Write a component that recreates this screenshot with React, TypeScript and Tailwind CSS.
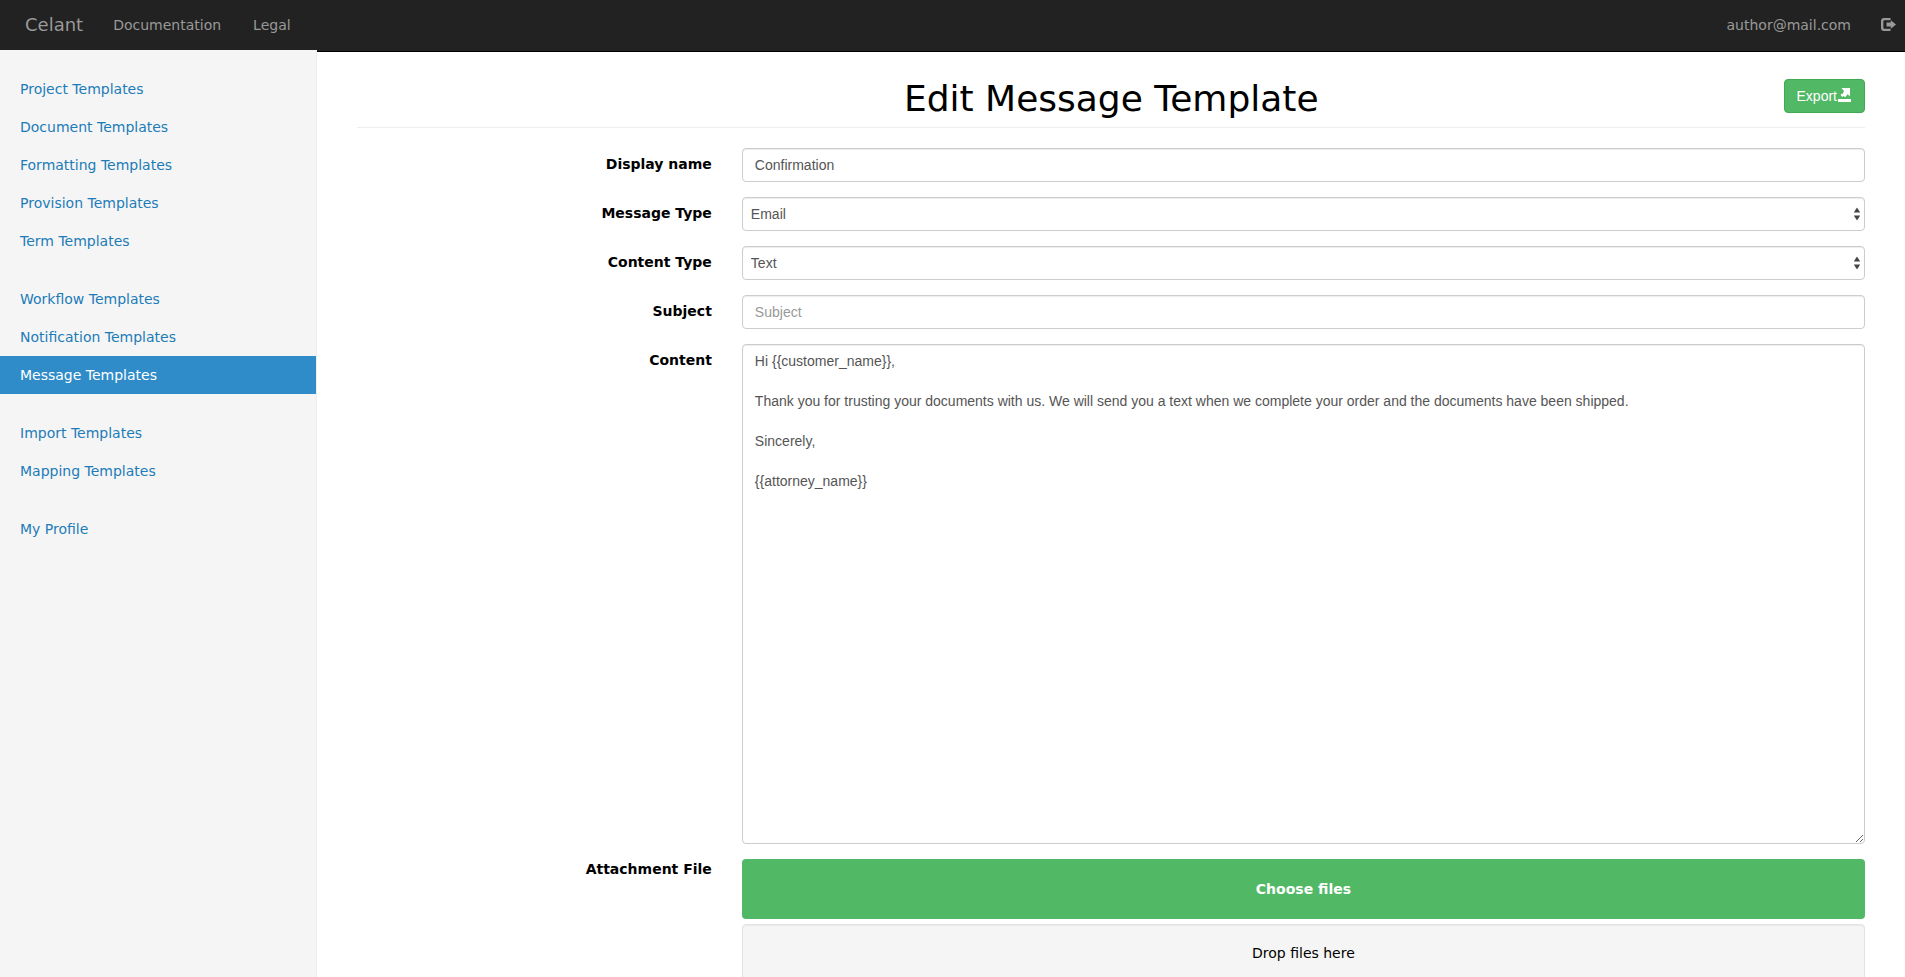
import React from 'react';

const navGroups: string[][] = [
  ['Project Templates', 'Document Templates', 'Formatting Templates', 'Provision Templates', 'Term Templates'],
  ['Workflow Templates', 'Notification Templates', 'Message Templates'],
  ['Import Templates', 'Mapping Templates'],
  ['My Profile'],
];

const activeItem = 'Message Templates';

const messageBody = `Hi {{customer_name}},

Thank you for trusting your documents with us. We will send you a text when we complete your order and the documents have been shipped.

Sincerely,

{{attorney_name}}`;

const controlClass =
  "block w-full rounded border border-[#cccccc] bg-white py-1.5 font-['Liberation_Sans',Arial,sans-serif] text-sm leading-5 text-[#555555] shadow-[inset_0_1px_1px_rgba(0,0,0,0.075)] outline-none placeholder:text-[#999999] placeholder:opacity-100 focus:border-[#66afe9]";

function LogOutIcon() {
  return (
    <svg className="h-[13px] w-[15px]" viewBox="0 0 15 13" fill="currentColor" aria-hidden="true">
      <path d="M9.5 0H3Q0 0 0 3v7q0 3 3 3h6.5v-2.300H3.400q-1 0-1-1V3.300q0-1 1-1h6.100z" />
      <path d="M9.800 2.200 15 6.500l-5.200 4.300V8.500H5.500v-4h4.300z" />
    </svg>
  );
}

function ExportIcon() {
  return (
    <svg className="h-3.5 w-3.5" viewBox="0 0 14 14" fill="currentColor" aria-hidden="true">
      <path d="M3.500 0H12v8.300L9.600 6.300 7.200 9.200 5.400 8 4.600 9 2.700 7.600l.5-2 1.200.6L6 3z" />
      <path d="M0 11h13v3H0z" />
    </svg>
  );
}

function SelectArrows() {
  return (
    <svg
      className="pointer-events-none absolute top-1/2 right-1 h-[13px] w-2 -translate-y-1/2"
      viewBox="0 0 8 13"
      fill="#444444"
      aria-hidden="true"
    >
      <path d="M4 0 7.200 5H.8z" />
      <path d="M4 13 .8 8h6.400z" />
    </svg>
  );
}

type FieldProps = {
  id: string;
  label: string;
  flush?: boolean;
  children: React.ReactNode;
};

function Field({ id, label, flush = false, children }: FieldProps) {
  return (
    <div className="-mx-[15px] flex">
      <label
        htmlFor={id}
        className={`w-1/4 px-[15px] text-right text-sm leading-5 font-bold ${flush ? 'pt-0' : 'pt-1.5'}`}
      >
        {label}
      </label>
      <div className="w-3/4 px-[15px]">{children}</div>
    </div>
  );
}

function SelectField({ id, label, options }: { id: string; label: string; options: string[] }) {
  return (
    <Field id={id} label={label}>
      <div className="relative">
        <select id={id} className={`${controlClass} appearance-none px-2`}>
          {options.map((option) => (
            <option key={option}>{option}</option>
          ))}
        </select>
        <SelectArrows />
      </div>
    </Field>
  );
}

function TopBar() {
  return (
    <header className="flex h-[52px] items-center justify-between border-b border-black bg-[#222222] pr-[9px] pb-0.5 pl-[25px] text-sm text-[#999999]">
      <div className="flex items-center gap-[30px]">
        <a href="#home" className="text-lg leading-5">Celant</a>
        <nav className="flex items-center gap-8">
          <a href="#documentation" className="leading-5">Documentation</a>
          <a href="#legal" className="leading-5">Legal</a>
        </nav>
      </div>
      <div className="flex items-center gap-[30px]">
        <a href="#account" className="leading-5">author@mail.com</a>
        <a href="#logout" aria-label="Log out">
          <LogOutIcon />
        </a>
      </div>
    </header>
  );
}

function Sidebar() {
  return (
    <aside className="relative -mt-0.5 w-1/6 shrink-0 border-r border-[#eeeeee] bg-[#f5f5f5] py-5">
      <nav className="flex flex-col gap-5">
        {navGroups.map((group) => (
          <ul key={group[0]}>
            {group.map((item) => (
              <li key={item}>
                <a
                  href={`#${item.toLowerCase().replace(' ', '-')}`}
                  className={
                    item === activeItem
                      ? 'block bg-[#2f8cc8] px-5 py-[9px] text-sm leading-5 text-white'
                      : 'block px-5 py-[9px] text-sm leading-5 text-[#1c7cb8] hover:bg-[#eeeeee]'
                  }
                >
                  {item}
                </a>
              </li>
            ))}
          </ul>
        ))}
      </nav>
    </aside>
  );
}

export default function App() {
  return (
    <div className="flex min-h-screen flex-col bg-white font-['DejaVu_Sans',Verdana,sans-serif] text-black">
      <TopBar />
      <div className="flex flex-1">
        <Sidebar />
        <main className="min-w-0 flex-1 px-10 pt-[27px]">
          <div className="relative mb-5 border-b border-[#eeeeee] pb-2">
            <h1 className="text-center text-4xl leading-10">Edit Message Template</h1>
            <button
              type="button"
              className="absolute top-0 right-0 flex h-[34px] items-center gap-px rounded border border-[#40a954] bg-[#51b865] px-3 font-['Liberation_Sans',Arial,sans-serif] text-sm leading-5 text-white"
            >
              Export
              <span className="pb-0.5">
                <ExportIcon />
              </span>
            </button>
          </div>
          <form className="flex flex-col gap-[15px]">
            <Field id="display-name" label="Display name">
              <input id="display-name" type="text" defaultValue="Confirmation" className={`${controlClass} px-3`} />
            </Field>
            <SelectField id="message-type" label="Message Type" options={['Email', 'SMS']} />
            <SelectField id="content-type" label="Content Type" options={['Text', 'HTML']} />
            <Field id="subject" label="Subject">
              <input id="subject" type="text" placeholder="Subject" className={`${controlClass} px-3`} />
            </Field>
            <Field id="content" label="Content">
              <textarea id="content" defaultValue={messageBody} className={`${controlClass} h-[500px] resize-y px-3`} />
            </Field>
            <Field id="attachment" label="Attachment File" flush>
              <button
                id="attachment"
                type="button"
                className="block h-[60px] w-full rounded bg-[#51b865] text-sm leading-5 font-bold text-white"
              >
                Choose files
              </button>
              <div className="mt-[5px] flex h-[58px] items-center justify-center rounded border border-[#e3e3e3] bg-[#f5f5f5] text-sm leading-5 shadow-[inset_0_1px_1px_rgba(0,0,0,0.05)]">
                Drop files here
              </div>
            </Field>
          </form>
        </main>
      </div>
    </div>
  );
}
